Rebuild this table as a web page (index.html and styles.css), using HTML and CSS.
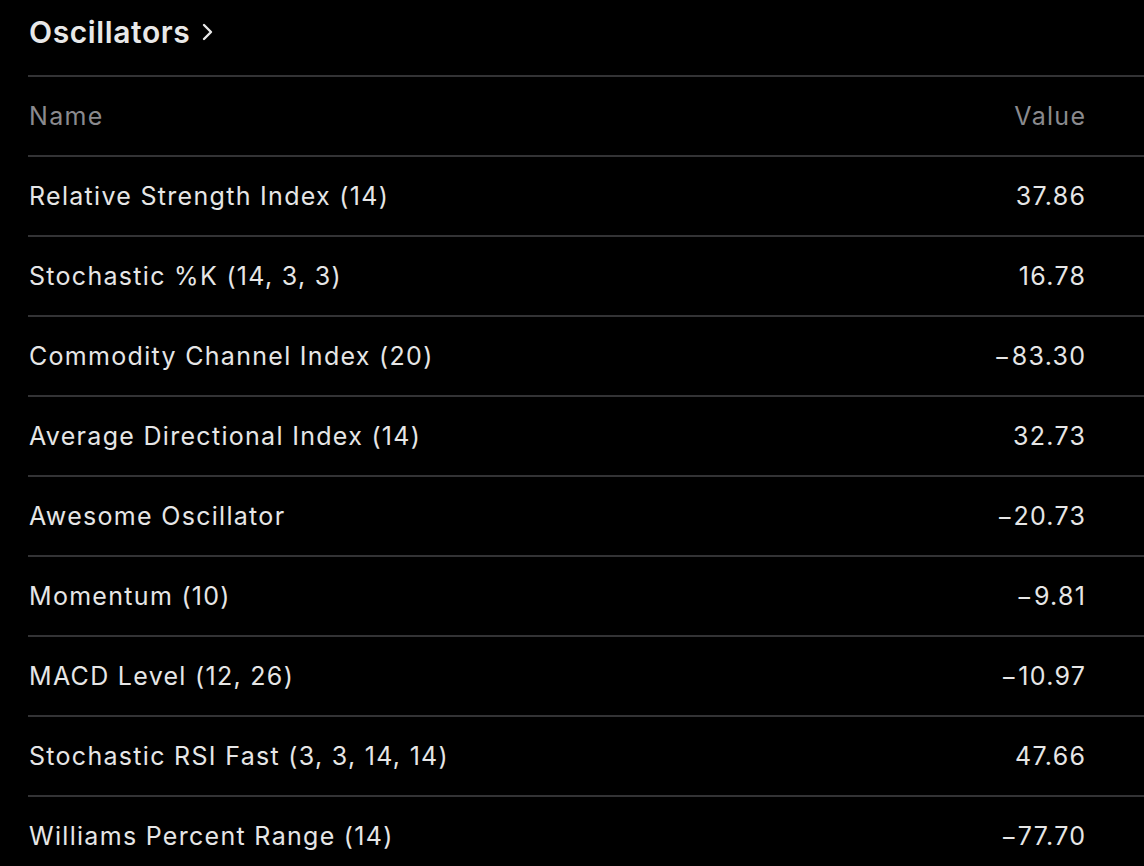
FILE: index.html
```html
<!DOCTYPE html>
<html>
<head>
<meta charset="utf-8">
<link rel="stylesheet" href="styles.css">
</head>
<body>
<section class="panel">
  <h2 class="title">Oscillators <svg class="chev" width="11" height="18" viewBox="0 0 11 18"><path d="M2 2 L9 9 L2 16" fill="none" stroke="currentColor" stroke-width="2.4" stroke-linecap="round" stroke-linejoin="round"/></svg></h2>
  <div class="table">
    <div class="row head"><span>Name</span><span>Value</span></div>
    <div class="row"><span>Relative Strength Index (14)</span><span>37.86</span></div>
    <div class="row"><span>Stochastic %K (14, 3, 3)</span><span>16.78</span></div>
    <div class="row"><span>Commodity Channel Index (20)</span><span>−83.30</span></div>
    <div class="row"><span>Average Directional Index (14)</span><span>32.73</span></div>
    <div class="row"><span>Awesome Oscillator</span><span>−20.73</span></div>
    <div class="row"><span>Momentum (10)</span><span>−9.81</span></div>
    <div class="row"><span>MACD Level (12, 26)</span><span>−10.97</span></div>
    <div class="row"><span>Stochastic RSI Fast (3, 3, 14, 14)</span><span>47.66</span></div>
    <div class="row"><span>Williams Percent Range (14)</span><span>−77.70</span></div>
  </div>
</section>
</body>
</html>
```
FILE: styles.css
```css
html, body {
  margin: 0;
  background: #000;
}
body {
  font-family: Inter, "Noto Sans", sans-serif;
  color: #e6e6e6;
  overflow: hidden;
}
.panel {
  padding-left: 28px;
}
.title {
  margin: 0;
  height: 75px;
  display: flex;
  align-items: center;
  gap: 12px;
  padding-left: 1px;
  padding-bottom: 12px;
  box-sizing: border-box;
  font-size: 30px;
  font-weight: 600;
  letter-spacing: 0.6px;
  color: #e8e8e8;
}
.chev {
  color: #e8e8e8;
  margin-top: 1px;
}
.row {
  display: flex;
  justify-content: space-between;
  align-items: center;
  height: 80px;
  box-sizing: border-box;
  border-top: 2px solid #333335;
  padding: 0 59px 0 1px;
  font-size: 25px;
  letter-spacing: 1.3px;
}
.row span:last-child {
  margin-right: -1.3px;
}
.row.head {
  color: #8a8a8e;
}
```
